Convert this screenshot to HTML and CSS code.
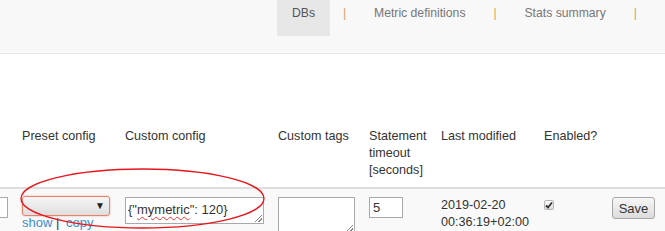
FILE: index.html
```html
<!DOCTYPE html>
<html lang="en">
<head>
    <meta charset="UTF-8">
    <title>DBs</title>
    <link rel="stylesheet" href="styles.css">
</head>
<body>
    <nav class="navbar">
        <ul class="nav-links">
            <li><a class="active" href="#">DBs</a></li>
            <li class="sep">|</li>
            <li><a href="#">Metric definitions</a></li>
            <li class="sep">|</li>
            <li><a href="#">Stats summary</a></li>
            <li class="sep">|</li>
        </ul>
    </nav>

    <div class="table-wrap">
        <table class="db-table">
            <thead>
                <tr>
                    <th class="col-first"></th>
                    <th class="col-preset">Preset config</th>
                    <th class="col-custom">Custom config</th>
                    <th class="col-tags">Custom tags</th>
                    <th class="col-timeout">Statement timeout [seconds]</th>
                    <th class="col-modified">Last modified</th>
                    <th class="col-enabled">Enabled?</th>
                    <th class="col-save"></th>
                </tr>
            </thead>
            <tbody>
                <tr>
                    <td><input type="text" class="first-input"></td>
                    <td>
                        <div class="fake-select"><span class="arrow">&#9660;</span></div>
                        <div class="links"><a href="#">show</a> <span class="bar">|</span> <a class="copy" href="#">copy</a></div>
                    </td>
                    <td>
                        <div class="config-area">{"<span class="misspelled">mymetric</span>": 120}<span class="grip"></span></div>
                    </td>
                    <td><div class="tags-area"><span class="grip"></span></div></td>
                    <td><input type="text" class="timeout-input" value="5"></td>
                    <td>2019-02-20<br>00:36:19+02:00</td>
                    <td>
                        <span class="check">
                            <svg width="8" height="8" viewBox="0 0 8 8"><path d="M1 4.5 L3 6.5 L7 1.5" fill="none" stroke="#333" stroke-width="1.8"/></svg>
                        </span>
                    </td>
                    <td><button class="save-btn">Save</button></td>
                </tr>
            </tbody>
        </table>
    </div>

    <svg class="annotation" width="665" height="231" viewBox="0 0 665 231">
        <ellipse cx="142.5" cy="198.5" rx="121.5" ry="29.5" fill="none" stroke="#e8141c" stroke-width="1.3"/>
    </svg>
</body>
</html>
```

FILE: styles.css
```css
* {
    box-sizing: border-box;
    margin: 0;
    padding: 0;
}

body {
    font-family: "Liberation Sans", Arial, sans-serif;
    font-size: 12.6px;
    line-height: 17px;
    color: #333;
    background: #fff;
    width: 665px;
    height: 231px;
    overflow: hidden;
    position: relative;
}

.navbar {
    height: 54px;
    background-color: #f8f8f8;
    border-bottom: 1px solid #e7e7e7;
}

.nav-links {
    list-style: none;
    display: flex;
    padding-left: 277px;
    font-size: 12.2px;
}

.nav-links a {
    display: block;
    padding: 4px 15px 14px;
    line-height: 18px;
    color: #777;
    text-decoration: none;
}

.nav-links a.active {
    background-color: #e7e7e7;
    color: #555;
}

.nav-links .sep {
    width: 29px;
    text-align: center;
    line-height: 18px;
    padding-top: 4px;
    color: #d6a262;
}

.table-wrap {
    margin-top: 66px;
    overflow: hidden;
}

.db-table {
    table-layout: fixed;
    border-collapse: collapse;
    margin-left: -60px;
    width: 800px;
}

.db-table th,
.db-table td {
    padding: 8px 7px;
    text-align: left;
    vertical-align: top;
}

.db-table th {
    font-weight: normal;
}

.db-table thead tr {
    border-bottom: 2px solid #ddd;
}

.db-table tbody tr {
    background-color: #f9f9f9;
}

.col-first { width: 75px; }
.col-preset { width: 103px; }
.col-custom { width: 153px; }
.col-tags { width: 91px; }
.col-timeout { width: 72px; }
.col-modified { width: 103px; }
.col-enabled { width: 68px; }
.col-save { width: 135px; }

.first-input {
    display: block;
    width: 100%;
    height: 21px;
    border: 1px solid #a9a9a9;
    background: #fff;
}

.fake-select {
    width: 88px;
    height: 20px;
    margin-top: -1px;
    border: 1px solid #e4826c;
    border-radius: 3px;
    background: linear-gradient(#f6f6f6, #dedede);
    box-shadow: 0 0 2px rgba(230, 90, 70, 0.5);
    position: relative;
}

.fake-select .arrow {
    position: absolute;
    right: 4px;
    top: 2px;
    font-size: 10px;
    line-height: 14px;
    color: #222;
}

.links {
    font-size: 13px;
    line-height: 17px;
    margin-top: -2px;
}

.links a {
    color: #428bca;
    text-decoration: none;
}

.links .copy {
    margin-left: 3px;
}

.links .bar {
    color: #333;
}

.config-area,
.tags-area {
    position: relative;
    font-size: 13px;
    line-height: 16px;
    border: 1px solid #a9a9a9;
    background: #fff;
    color: #333;
    padding: 4px 2px;
    white-space: nowrap;
}

.config-area {
    width: 139px;
    height: 27px;
}

.tags-area {
    width: 77px;
    height: 37px;
}

.misspelled {
    text-decoration: underline wavy #e33;
    text-decoration-thickness: 1px;
    text-underline-offset: 2px;
}

.grip {
    position: absolute;
    right: 1px;
    bottom: 1px;
    width: 7px;
    height: 7px;
    background: linear-gradient(135deg, transparent 45%, #888 45%, #888 55%, transparent 55%, transparent 70%, #888 70%, #888 80%, transparent 80%);
}

.timeout-input {
    display: block;
    width: 34px;
    height: 21px;
    border: 1px solid #a9a9a9;
    background: #fff;
    font-family: "Liberation Sans", Arial, sans-serif;
    font-size: 13px;
    color: #333;
    padding: 0 3px;
}

.check {
    display: flex;
    align-items: center;
    justify-content: center;
    width: 10px;
    height: 10px;
    margin-top: 3px;
    border: 1px solid #b5b5b5;
    border-radius: 2px;
    background: linear-gradient(#fafafa, #dcdcdc);
}

.save-btn {
    display: block;
    width: 43px;
    height: 22px;
    font-family: "Liberation Sans", Arial, sans-serif;
    font-size: 13px;
    color: #333;
    border: 1px solid #a6a6a6;
    border-radius: 3px;
    background: linear-gradient(#f7f7f7, #dcdcdc);
}

.annotation {
    position: absolute;
    left: 0;
    top: 0;
    pointer-events: none;
}
```
